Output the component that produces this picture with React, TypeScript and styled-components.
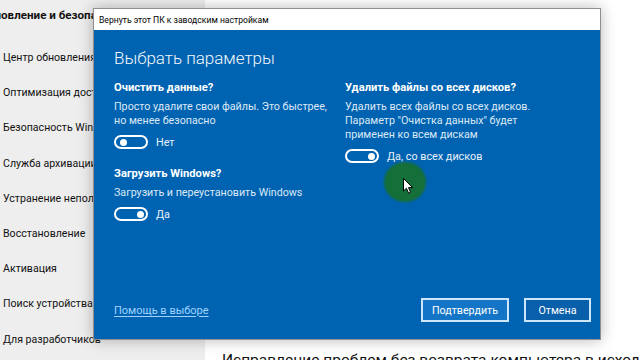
import styled, { createGlobalStyle } from "styled-components";

const GlobalStyle = createGlobalStyle`
  html, body {
    margin: 0;
    padding: 0;
    background: #ffffff;
  }
  body {
    font-family: "Segoe UI", Roboto, "Noto Sans", sans-serif;
  }
`;

const Screen = styled.div`
  position: relative;
  width: 640px;
  height: 360px;
  overflow: hidden;
  display: flex;
`;

const Sidebar = styled.nav`
  width: 205px;
  flex: none;
  background: #eeeeee;
  display: flex;
  flex-direction: column;
  white-space: nowrap;
  overflow: hidden;
`;

const SidebarHeader = styled.h2`
  margin: 0 0 0 -20px;
  height: 30px;
  line-height: 30px;
  font-size: 11.6px;
  font-weight: 700;
  color: #111;
`;

const SidebarList = styled.div`
  padding-top: 10px;
  display: flex;
  flex-direction: column;
`;

const SidebarItem = styled.div`
  height: 35.2px;
  line-height: 35px;
  padding-left: 3px;
  font-size: 10.6px;
  color: #111;
`;

const Main = styled.main`
  flex: 1;
  background: #ffffff;
  padding: 351px 0 0 17px;
  white-space: nowrap;
  overflow: hidden;
`;

const MainText = styled.p`
  margin: 0;
  font-size: 15.5px;
  color: #111;
`;

const Dialog = styled.div`
  position: absolute;
  left: 93px;
  top: 8px;
  width: 508px;
  height: 332px;
  box-sizing: border-box;
  border: 1px solid #8f8f8f;
  box-shadow: 0 0 14px rgba(0, 0, 0, 0.28);
  display: flex;
  flex-direction: column;
`;

const TitleBar = styled.div`
  height: 21px;
  flex: none;
  background: #ffffff;
  display: flex;
  align-items: center;
  padding-left: 5px;
  font-size: 8.6px;
  color: #000;
`;

const Body = styled.div`
  flex: 1;
  background: #0063b1;
  color: #ffffff;
  padding: 15px 9px 17px 20px;
  display: flex;
  flex-direction: column;
  white-space: nowrap;
`;

const Heading = styled.h1`
  margin: 0;
  font-size: 17px;
  line-height: 26px;
  font-weight: 300;
  color: #f4f8fc;
`;

const Columns = styled.div`
  margin-top: 9px;
  display: grid;
  grid-template-columns: 231px 1fr;
`;

const Column = styled.div`
  display: flex;
  flex-direction: column;
`;

const Section = styled.section`
  display: flex;
  flex-direction: column;
  & + & {
    margin-top: 16px;
  }
`;

const SectionTitle = styled.h2`
  margin: 0;
  font-size: 11.2px;
  line-height: 16px;
  font-weight: 700;
  color: #ffffff;
`;

const Description = styled.p`
  margin: 4px 0 0;
  font-size: 10.7px;
  line-height: 14px;
  color: #dce9f6;
`;

const ToggleRow = styled.div`
  margin-top: 6px;
  display: flex;
  align-items: center;
  gap: 8px;
  height: 16px;
  font-size: 10.8px;
  color: #e8f1fa;
`;

const Toggle = styled.span<{ $on?: boolean }>`
  position: relative;
  width: 34px;
  height: 14px;
  box-sizing: border-box;
  border: 2px solid #ffffff;
  border-radius: 8px;
  flex: none;
  &::after {
    content: "";
    position: absolute;
    top: 1.5px;
    left: ${(p) => (p.$on ? "21px" : "4px")};
    width: 7px;
    height: 7px;
    border-radius: 50%;
    background: #ffffff;
  }
`;

const Spacer = styled.div`
  flex: 1;
`;

const Footer = styled.div`
  display: flex;
  align-items: center;
  justify-content: space-between;
`;

const HelpLink = styled.a`
  font-size: 11px;
  color: #9fd3ff;
  text-decoration: underline;
  text-underline-offset: 2px;
`;

const Buttons = styled.div`
  display: flex;
  gap: 15px;
`;

const Button = styled.button<{ $primary?: boolean }>`
  height: 24px;
  width: ${(p) => (p.$primary ? "88px" : "67px")};
  box-sizing: border-box;
  border: 2px solid #cde6f9;
  background: ${(p) => (p.$primary ? "#1475c6" : "#0a5fab")};
  color: #ffffff;
  font-family: inherit;
  font-size: 10.7px;
  padding: 0;
`;

const Highlight = styled.div`
  position: absolute;
  left: 384px;
  top: 162px;
  width: 42px;
  height: 40px;
  border-radius: 50%;
  background: rgba(22, 112, 50, 0.95);
  filter: blur(1px);
`;

const Cursor = styled.svg`
  position: absolute;
  left: 403px;
  top: 178px;
  width: 11px;
  height: 16px;
`;

const sidebarItems = [
  "Центр обновления Windows",
  "Оптимизация доставки",
  "Безопасность Windows",
  "Служба архивации",
  "Устранение неполадок",
  "Восстановление",
  "Активация",
  "Поиск устройства",
  "Для разработчиков",
];

export default function App() {
  return (
    <>
      <GlobalStyle />
      <Screen>
        <Sidebar>
          <SidebarHeader>Обновление и безопасность</SidebarHeader>
          <SidebarList>
            {sidebarItems.map((item) => (
              <SidebarItem key={item}>{item}</SidebarItem>
            ))}
          </SidebarList>
        </Sidebar>
        <Main>
          <MainText>
            Исправление проблем без возврата компьютера в исходное состояние
          </MainText>
        </Main>

        <Dialog>
          <TitleBar>Вернуть этот ПК к заводским настройкам</TitleBar>
          <Body>
            <Heading>Выбрать параметры</Heading>
            <Columns>
              <Column>
                <Section>
                  <SectionTitle>Очистить данные?</SectionTitle>
                  <Description>
                    Просто удалите свои файлы. Это быстрее,
                    <br />
                    но менее безопасно
                  </Description>
                  <ToggleRow>
                    <Toggle />
                    Нет
                  </ToggleRow>
                </Section>
                <Section>
                  <SectionTitle>Загрузить Windows?</SectionTitle>
                  <Description>Загрузить и переустановить Windows</Description>
                  <ToggleRow>
                    <Toggle $on />
                    Да
                  </ToggleRow>
                </Section>
              </Column>
              <Column>
                <Section>
                  <SectionTitle>Удалить файлы со всех дисков?</SectionTitle>
                  <Description>
                    Удалить всех файлы со всех дисков.
                    <br />
                    Параметр "Очистка данных" будет
                    <br />
                    применен ко всем дискам
                  </Description>
                  <ToggleRow>
                    <Toggle $on />
                    Да, со всех дисков
                  </ToggleRow>
                </Section>
              </Column>
            </Columns>
            <Spacer />
            <Footer>
              <HelpLink href="#">Помощь в выборе</HelpLink>
              <Buttons>
                <Button $primary>Подтвердить</Button>
                <Button>Отмена</Button>
              </Buttons>
            </Footer>
          </Body>
        </Dialog>

        <Highlight />
        <Cursor viewBox="0 0 11 16">
          <path
            d="M0.5 0.5 L0.5 13 L3.4 10.3 L5.6 15.2 L7.6 14.3 L5.5 9.6 L9.6 9.6 Z"
            fill="#ffffff"
            stroke="#000000"
            strokeWidth="1"
            strokeLinejoin="round"
          />
        </Cursor>
      </Screen>
    </>
  );
}
